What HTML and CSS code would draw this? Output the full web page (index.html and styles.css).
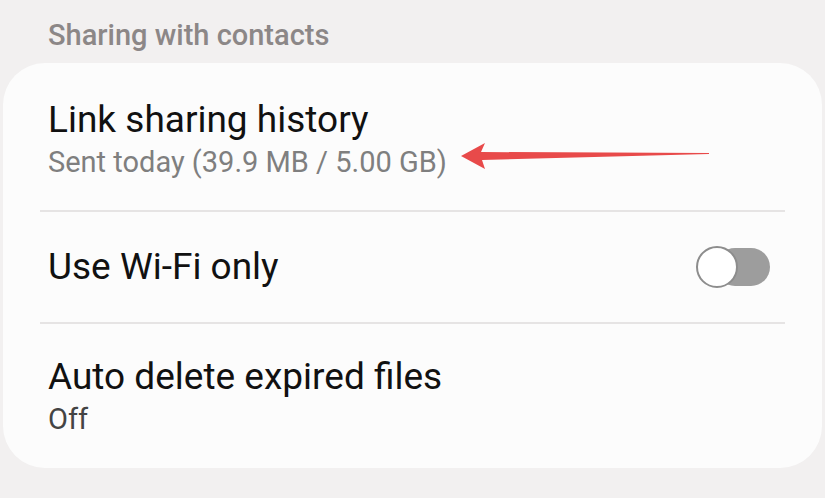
FILE: index.html
```html
<!DOCTYPE html>
<html>

<head>
    <title>Sharing with contacts</title>
    <link rel="stylesheet" href="styles.css">
</head>

<body>
    <h2 class="section-title">Sharing with contacts</h2>
    <div class="card">
        <div class="row">
            <div class="row-text">
                <div class="title">Link sharing history</div>
                <div class="summary">Sent today (39.9 MB / 5.00 GB)</div>
            </div>
            <!-- red annotation arrow -->
            <svg class="arrow" width="260" height="30" viewBox="0 0 260 30">
                <path d="M0 15 L24 2 L20 11 L248 12 L248 13 L21 19 L24 28 Z" fill="#e84a4a" />
            </svg>
        </div>
        <div class="divider"></div>
        <div class="row row-switch">
            <div class="title">Use Wi-Fi only</div>
            <div class="switch">
                <div class="switch-knob"></div>
            </div>
        </div>
        <div class="divider"></div>
        <div class="row">
            <div class="row-text">
                <div class="title">Auto delete expired files</div>
                <div class="summary dark">Off</div>
            </div>
        </div>
    </div>
</body>

</html>
```

FILE: styles.css
```css
body {
    font-family: Roboto, "Noto Sans", sans-serif;
    margin: 0;
    background-color: #f2f0f0;
    width: 825px;
    height: 498px;
    overflow: hidden;
}

.section-title {
    margin: 0;
    padding: 18px 0 0 48px;
    height: 63px;
    box-sizing: border-box;
    font-size: 29px;
    line-height: 34px;
    font-weight: 500;
    color: #8c8787;
}

.card {
    margin: 0 3px;
    background-color: #fcfcfc;
    border-radius: 42px;
    padding: 0 37px 0 37px;
}

.row {
    position: relative;
    padding: 0 8px;
}

.row:first-child {
    padding-top: 35px;
    padding-bottom: 28px;
}

.row:last-child {
    padding-top: 31px;
    padding-bottom: 29px;
}

.title {
    font-size: 37px;
    color: #111;
    line-height: 44px;
}

.summary {
    font-size: 29px;
    color: #7f7f7f;
    line-height: 40px;
}

.summary.dark {
    color: #444;
}

.divider {
    height: 2px;
    background-color: #e6e4e4;
}

.row-switch {
    display: flex;
    align-items: center;
    justify-content: space-between;
    height: 110px;
    padding-right: 15px;
}

.switch {
    position: relative;
    width: 74px;
    height: 38px;
}

.switch::before {
    content: "";
    position: absolute;
    left: 20px;
    right: 0;
    top: 0;
    bottom: 0;
    background-color: #9d9d9d;
    border-radius: 19px;
}

.switch-knob {
    position: absolute;
    left: 0;
    top: -2px;
    width: 38px;
    height: 38px;
    border: 2px solid #8d8d8d;
    border-radius: 50%;
    background-color: #fff;
}

.arrow {
    position: absolute;
    left: 421px;
    top: 78px;
}
```
